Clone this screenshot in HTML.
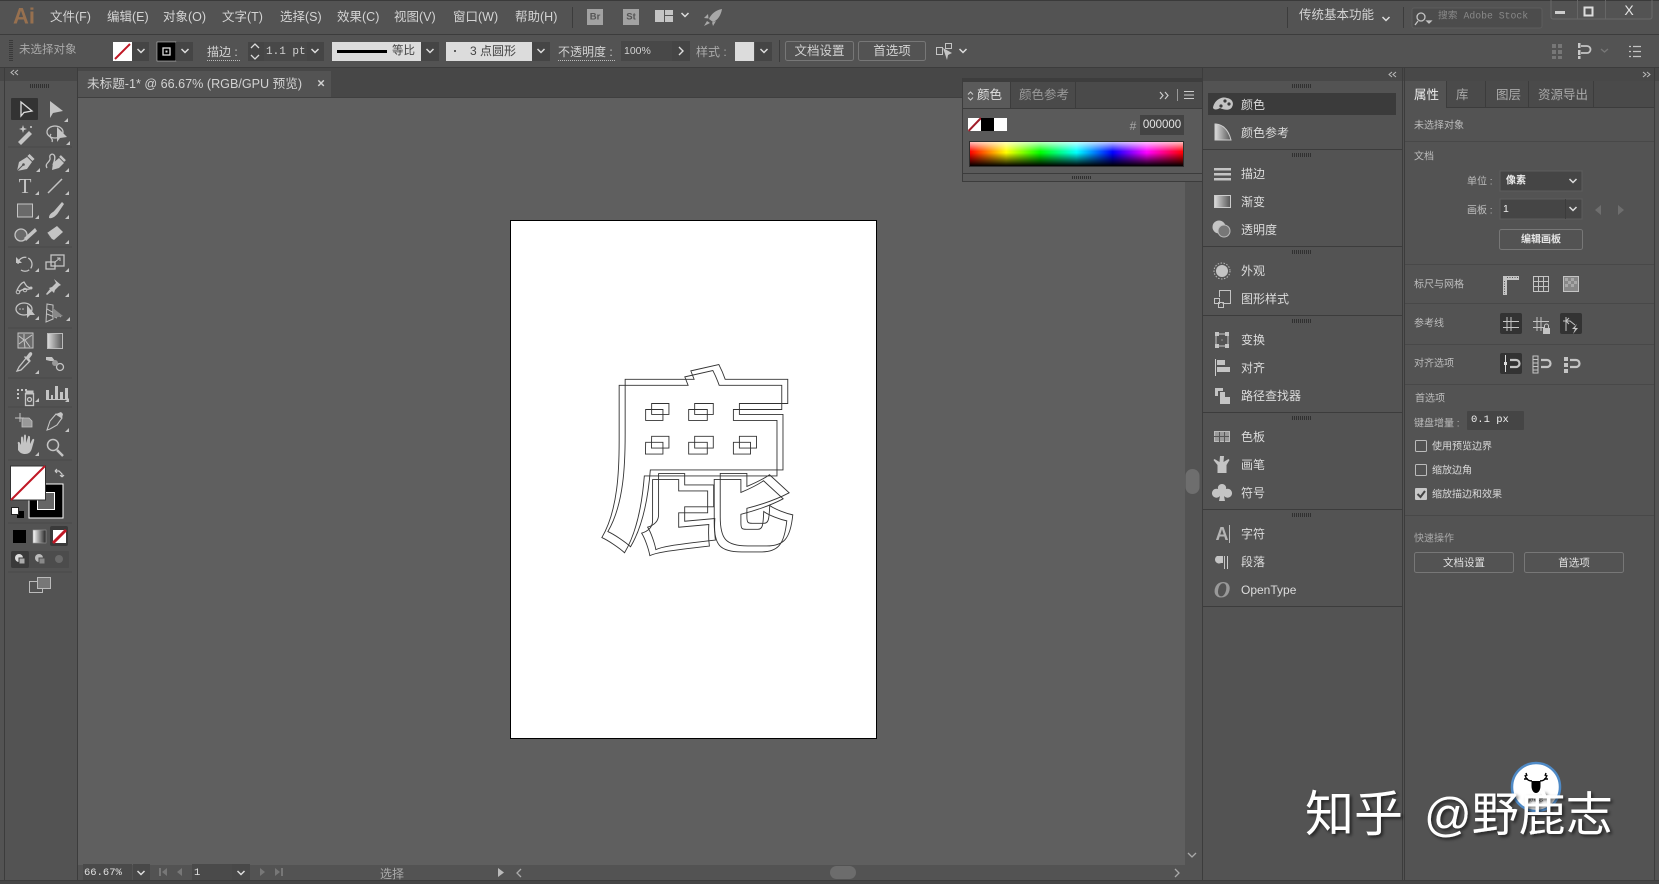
<!DOCTYPE html>
<html lang="zh"><head><meta charset="utf-8"><title>Illustrator</title>
<style>
html,body{margin:0;padding:0;background:#535353;overflow:hidden}
svg{display:block}
text{font-family:"Liberation Sans","Noto Sans CJK SC",sans-serif;fill:#d2d2d2;font-size:12px;dominant-baseline:central}
.m{font-size:12.5px;fill:#d4d4d4}
.d{fill:#aaa}
.s{font-size:10px;fill:#bdbdbd}
.p{font-size:12px;fill:#dcdcdc}
.mono{font-family:"Liberation Mono","Noto Sans CJK SC",monospace}
.i{fill:#c4c4c4;stroke:none}
.o{fill:none;stroke:#c4c4c4;stroke-width:1.3}
.l{stroke:#3c3c3c;stroke-width:1;fill:none}
.g{stroke:#303030;stroke-width:4;stroke-dasharray:1 1;fill:none}
.b{fill:none;stroke:#777;stroke-width:1}
</style></head><body>
<svg width="1659" height="884" viewBox="0 0 1659 884" xmlns="http://www.w3.org/2000/svg">
<defs>
<path id="c" d="M-3.5 -2L0 1.500L3.500 -2" fill="none" stroke="#dcdcdc" stroke-width="1.500"/>
<path id="t" d="M0 0L4 0L4 -4Z" fill="#c4c4c4"/>
<linearGradient id="sp"><stop offset="0" stop-color="#f00"/><stop offset=".17" stop-color="#ff0"/><stop offset=".33" stop-color="#0f0"/><stop offset=".5" stop-color="#0ff"/><stop offset=".67" stop-color="#00f"/><stop offset=".83" stop-color="#f0f"/><stop offset="1" stop-color="#f00"/></linearGradient>
<linearGradient id="sv" x1="0" y1="0" x2="0" y2="1"><stop offset="0" stop-color="#fff" stop-opacity=".75"/><stop offset=".4" stop-color="#fff" stop-opacity="0"/><stop offset=".45" stop-color="#000" stop-opacity="0"/><stop offset="1" stop-color="#000"/></linearGradient>
<linearGradient id="gr"><stop offset="0" stop-color="#ddd"/><stop offset="1" stop-color="#555"/></linearGradient>
<linearGradient id="gw"><stop offset="0" stop-color="#fff"/><stop offset="1" stop-color="#222"/></linearGradient>
<filter id="sh" x="-5%" y="-10%" width="110%" height="125%"><feDropShadow dx="2" dy="2" stdDeviation="1.500" flood-color="#000" flood-opacity=".6"/></filter>
</defs>

<!-- base -->
<rect width="1659" height="884" fill="#535353"/>
<rect x="0" y="0" width="1659" height="1" fill="#3a3a3a"/>
<path class="l" d="M0 34.500H1659M0 67.500H1659"/>
<rect x="0" y="68" width="1659" height="13" fill="#484848"/>
<rect x="78" y="68" width="1124" height="30" fill="#474747"/>
<rect x="78" y="71" width="253" height="27" fill="#535353"/>
<rect x="78" y="98" width="1107" height="767" fill="#5f5f5f"/>
<rect x="78" y="97" width="1107" height="1" fill="#3f3f3f"/>

<!-- left toolbar frame -->
<rect x="4" y="81" width="73" height="799" fill="#535353"/>
<path class="l" d="M4.500 68V880M77.500 68V880M0 880.500H1659"/>
<rect x="0" y="881" width="1659" height="3" fill="#454545"/>
<path d="M14 70L11 72.500L14 75M18 70L15 72.500L18 75" fill="none" stroke="#bbb"/>
<path class="g" d="M30 86H50"/>

<!-- menu -->
<text x="13" y="16" style="font-size:22px;font-weight:700;fill:#97704f">Ai</text>
<text class="m" x="50" y="17">文件(F)</text>
<text class="m" x="107" y="17">编辑(E)</text>
<text class="m" x="163" y="17">对象(O)</text>
<text class="m" x="222" y="17">文字(T)</text>
<text class="m" x="280" y="17">选择(S)</text>
<text class="m" x="337" y="17">效果(C)</text>
<text class="m" x="394" y="17">视图(V)</text>
<text class="m" x="453" y="17">窗口(W)</text>
<text class="m" x="515" y="17">帮助(H)</text>
<path class="l" d="M572.500 7V28M1287.500 7V28M1403.500 7V28"/>
<rect x="587" y="9" width="16" height="16" fill="#a2a2a2"/><text x="595" y="17" text-anchor="middle" style="font-size:9.500px;font-weight:700;fill:#555">Br</text>
<rect x="623" y="9" width="16" height="16" fill="#a2a2a2"/><text x="631" y="17" text-anchor="middle" style="font-size:9.500px;font-weight:700;fill:#555">St</text>
<path class="i" d="M655 10h9v12h-9zM665 10h8v5h-8zM665 16h8v6h-8z"/>
<use href="#c" x="685" y="15"/>
<path fill="#a8a8a8" d="M722 9C716 10 711 14 709 19L713 22C718 20 721 15 722 9ZM708 14L704 18L708.500 18.500ZM716 21L713 26L712 22.500ZM707 21L704 26L710 23Z"/>

<text x="1299" y="15" style="font-size:12.500px;fill:#d4d4d4">传统基本功能</text>
<use href="#c" x="1386" y="19"/>
<rect x="1412" y="8" width="130" height="20" rx="2" fill="#4c4c4c" stroke="#5c5c5c"/>
<circle cx="1421" cy="17" r="4" class="o"/><path class="o" d="M1418 21L1415 25M1427 21h4l-2 2z"/>
<text class="mono" x="1438" y="16" style="font-size:9.800px;fill:#888">搜索 Adobe Stock</text>
<rect x="1551" y="-2" width="101" height="21" rx="2" fill="none" stroke="#6a6a6a"/>
<path class="l" style="stroke:#666" d="M1577.500 0V19M1605.500 0V19"/>
<rect x="1555" y="11" width="10" height="3" fill="#ccc"/>
<rect x="1584.500" y="7.500" width="8" height="8" fill="none" stroke="#ddd" stroke-width="2"/>
<text x="1629" y="10" text-anchor="middle" style="font-size:14px;fill:#e4e4e4">X</text>

<!-- control bar -->
<path class="g" style="stroke:#3a3a3a" d="M11 40V62" />
<text x="19" y="50" style="font-size:11.500px;fill:#aaa">未选择对象</text>
<rect x="113" y="42" width="19" height="19" fill="#fff"/><path d="M115 59L130 44" stroke="#c01825" stroke-width="2"/>
<rect x="132" y="42" width="17" height="19" fill="#454545"/><use href="#c" x="141" y="51"/>
<rect x="157" y="42" width="19" height="19" fill="#000" stroke="#ddd" stroke-width=".5"/><rect x="163" y="48" width="7" height="7" fill="none" stroke="#ddd" stroke-width="1.300"/><rect x="165.500" y="50.500" width="2" height="2" fill="#ddd"/>
<rect x="176" y="42" width="17" height="19" fill="#454545"/><use href="#c" x="185" y="51"/>
<text x="207" y="52" style="font-size:12px">描边 :</text><path d="M207 60.500H240" stroke="#bbb" stroke-dasharray="1 1"/>
<rect x="248" y="42" width="76" height="19" fill="#454545"/>
<path d="M251 48L255 44L259 48M251 55L255 59L259 55" fill="none" stroke="#ddd" stroke-width="1.300"/>
<rect x="264" y="42" width="43" height="19" fill="#484848"/>
<text class="mono" x="266" y="52" style="font-size:11px">1.1 pt</text>
<use href="#c" x="315" y="51"/>
<rect x="332" y="42" width="89" height="19" fill="#dcdcdc"/><rect x="337" y="50" width="50" height="3" fill="#000"/>
<text x="392" y="51" style="font-size:11.500px;fill:#444">等比</text>
<rect x="421" y="42" width="18" height="19" fill="#454545"/><use href="#c" x="430" y="51"/>
<rect x="446" y="42" width="86" height="19" fill="#dcdcdc"/><circle cx="455" cy="51" r="1" fill="#333"/>
<text x="470" y="51" style="font-size:12px;fill:#444">3 点圆形</text>
<rect x="532" y="42" width="18" height="19" fill="#454545"/><use href="#c" x="541" y="51"/>
<text x="558" y="52" style="font-size:12px">不透明度 :</text><path d="M558 60.500H616" stroke="#bbb" stroke-dasharray="1 1"/>
<rect x="621" y="41" width="51" height="20" fill="#484848"/><text x="624" y="51" style="font-size:10.500px">100%</text>
<rect x="672" y="41" width="18" height="20" fill="#454545"/><path d="M679 47L683 51L679 55" fill="none" stroke="#ddd" stroke-width="1.400"/>
<text x="696" y="52" class="d">样式 :</text>
<rect x="735" y="42" width="19" height="19" fill="#dcdcdc"/>
<rect x="755" y="42" width="17" height="19" fill="#454545"/><use href="#c" x="764" y="51"/>
<path class="l" d="M779.500 40V62"/>
<rect x="785.500" y="41.500" width="68" height="19" rx="2" class="b"/><text x="819.500" y="51" text-anchor="middle" style="font-size:12.500px">文档设置</text>
<rect x="858.500" y="41.500" width="67" height="19" rx="2" class="b"/><text x="892" y="51" text-anchor="middle" style="font-size:12.500px">首选项</text>
<path class="o" style="stroke-width:1" d="M936.500 47.500h6v7h-6zM945.500 43.500h6v5h-6z"/><path class="i" d="M943 48L952 53L948 55L947 60Z"/>
<use href="#c" x="963" y="51"/>
<path class="i" style="fill:#777" d="M1552 44h4v4h-4zM1558 44h4v4h-4zM1552 50h4v4h-4zM1558 50h4v4h-4zM1552 56h4v3h-4zM1558 56h4v3h-4z"/>
<path class="o" d="M1581 46h6a3 3 0 0 1 0 7h-6" style="stroke-width:1.800"/><rect x="1578" y="43" width="2.500" height="5" fill="#c9c9c9"/><rect x="1578" y="50" width="2.500" height="5" fill="#c9c9c9"/><rect x="1578" y="56" width="2.500" height="3" fill="#c9c9c9"/>
<path d="M1601 49L1604.500 52L1608 49" fill="none" stroke="#777" stroke-width="1.300"/>
<path class="o" d="M1629 46.500h2M1633 46.500h8M1629 51.500h2M1633 51.500h8M1629 56.500h2M1633 56.500h8" style="stroke-width:1.200"/>

<!-- document tab -->
<text x="87" y="84" style="font-size:12.600px">未标题-1* @ 66.67% (RGB/GPU 预览)</text>
<text x="321" y="83" text-anchor="middle" style="font-size:13px;font-weight:700">×</text>

<!-- artboard -->
<rect x="510.500" y="220.500" width="366" height="518" fill="#fff" stroke="#000"/>
<text x="701" y="531" text-anchor="middle" style="font-family:'Noto Sans CJK SC',sans-serif;font-weight:900;font-size:192px;fill:none;stroke:#333;stroke-width:.9;dominant-baseline:auto">鹿</text>
<text x="695" y="537" text-anchor="middle" style="font-family:'Noto Sans CJK SC',sans-serif;font-weight:900;font-size:192px;fill:none;stroke:#333;stroke-width:.9;dominant-baseline:auto">鹿</text>

<!-- vertical and horizontal scrollbars -->
<rect x="1185" y="98" width="17" height="767" fill="#535353"/>
<rect x="1185.500" y="469" width="14" height="25" rx="7" fill="#6e6e6e"/>
<path d="M1188 853L1192 857L1196 853" fill="none" stroke="#aaa" stroke-width="1.300"/>
<rect x="78" y="865" width="1124" height="15" fill="#535353"/>
<rect x="830" y="866" width="26" height="13" rx="6.500" fill="#6c6c6c"/>
<path d="M1175 869L1179 873L1175 877M521 869L517 873L521 877" fill="none" stroke="#aaa" stroke-width="1.300"/>
<rect x="83" y="864" width="49" height="16" fill="#4a4a4a"/>
<text class="mono" x="84" y="873" style="font-size:10.500px;fill:#e0e0e0">66.67%</text>
<rect x="133" y="864" width="17" height="16" fill="#484848"/><use href="#c" x="141" y="873"/>
<path fill="#777" d="M159 868h2v8h-2zM167 868v8l-5-4zM182 868v8l-5-4z"/>
<rect x="192" y="864" width="40" height="16" fill="#4a4a4a"/><text class="mono" x="194" y="873" style="font-size:10.500px;fill:#e0e0e0">1</text>
<rect x="232" y="864" width="18" height="16" fill="#484848"/><use href="#c" x="241" y="873"/>
<path fill="#777" d="M260 868v8l5-4zM275 868v8l5-4zM281 868h2v8h-2z"/>
<text x="392" y="874" text-anchor="middle" class="d">选择</text>
<path fill="#bbb" d="M498 868v9l6-4.500z"/>

<!-- color panel -->
<rect x="962" y="78" width="240" height="4" fill="#3d3d3d"/>
<rect x="962" y="82" width="240" height="26" fill="#4a4a4a"/>
<rect x="962" y="82" width="48" height="27" fill="#5a5a5a"/>
<rect x="962" y="108" width="240" height="66" fill="#5a5a5a"/>
<rect x="962" y="174" width="240" height="7" fill="#5a5a5a"/>
<path class="l" d="M962.500 78V182M962 108.500H1010M1010.500 82V108M1075.500 82V108M1010 108.500H1202M962 173.500H1202M962 181.500H1202"/>
<path d="M968 94.500L970.500 92L973 94.500M968 97.500L970.500 100L973 97.500" fill="none" stroke="#ccc"/>
<text x="977" y="95" style="font-size:12.500px;fill:#e0e0e0">颜色</text>
<text x="1019" y="95" style="font-size:12.500px;fill:#9a9a9a">颜色参考</text>
<path d="M1160 92l3 3.500l-3 3.500M1165 92l3 3.500l-3 3.500" fill="none" stroke="#ccc" stroke-width="1.200"/>
<path d="M1177.500 89V101" stroke="#999"/>
<path d="M1184 91.500h10M1184 95h10M1184 98.500h10" stroke="#ccc" stroke-width="1"/>
<rect x="968" y="118" width="13" height="13" fill="#fff"/><path d="M968.500 131L981 118" stroke="#a01c28" stroke-width="2"/>
<rect x="981" y="118" width="13" height="13" fill="#000"/><rect x="994" y="118" width="13" height="13" fill="#fff"/>
<text x="1133" y="126" text-anchor="middle" style="fill:#aaa;font-size:12px">#</text>
<rect x="1140" y="115" width="44" height="20" fill="#434343"/>
<text x="1162" y="125" text-anchor="middle" style="font-size:11.500px;fill:#e4e4e4">000000</text>
<rect x="970" y="142" width="213" height="24" fill="url(#sp)"/><rect x="970" y="142" width="213" height="24" fill="url(#sv)"/>
<rect x="969.500" y="141.500" width="214" height="25" fill="none" stroke="#2f2f2f"/>
<path class="g" d="M1072 177.500H1092" style="stroke-width:3"/>

<!-- dock -->
<path d="M1392 72L1389 74.500L1392 77M1396 72L1393 74.500L1396 77" fill="none" stroke="#bbb"/>
<path d="M1643 72L1646 74.500L1643 77M1647 72L1650 74.500L1647 77" fill="none" stroke="#bbb"/>
<rect x="1202" y="81" width="200" height="799" fill="#535353"/>
<rect x="1405" y="81" width="250" height="799" fill="#535353"/>
<path class="l" d="M1202.500 68V880M1402.500 68V880M1404.500 68V880M1654.500 68V880"/>
<path class="l" d="M1202 149.500H1402M1202 246.500H1402M1202 315.500H1402M1202 412.500H1402M1202 509.500H1402M1202 606.500H1402"/>
<path class="g" d="M1292 86H1312M1292 155H1312M1292 252H1312M1292 321H1312M1292 418H1312M1292 515H1312"/>
<rect x="1208" y="93" width="188" height="22" fill="#3b3b3b"/>
<g>
<text class="p" x="1241" y="105">颜色</text>
<text class="p" x="1241" y="133">颜色参考</text>
<text class="p" x="1241" y="174">描边</text>
<text class="p" x="1241" y="202">渐变</text>
<text class="p" x="1241" y="230">透明度</text>
<text class="p" x="1241" y="271">外观</text>
<text class="p" x="1241" y="299">图形样式</text>
<text class="p" x="1241" y="340">变换</text>
<text class="p" x="1241" y="368">对齐</text>
<text class="p" x="1241" y="396">路径查找器</text>
<text class="p" x="1241" y="437">色板</text>
<text class="p" x="1241" y="465">画笔</text>
<text class="p" x="1241" y="493">符号</text>
<text class="p" x="1241" y="534">字符</text>
<text class="p" x="1241" y="562">段落</text>
<text class="p" x="1241" y="590">OpenType</text>
</g>
<!-- dock icons -->
<path class="i" d="M1213 108C1214 100 1222 96 1227 98C1233 99 1234 104 1232 107C1230 111 1224 110 1220 108C1217 110 1214 110 1213 108Z"/><g fill="#3b3b3b"><circle cx="1221" cy="106" r="1.600"/><circle cx="1225" cy="101" r="1.600"/><circle cx="1229" cy="104" r="1.600"/></g>
<path d="M1215 124H1216C1225 125 1229 132 1231 140H1215Z" fill="url(#gr)" stroke="#ccc"/>
<path d="M1214 168h17v2.500h-17zM1214 173h17v2.500h-17zM1214 178h17v2.500h-17z" class="i"/>
<rect x="1214.500" y="195.500" width="16" height="12" fill="url(#gr)" stroke="#ccc"/>
<circle cx="1219" cy="227" r="6.500" fill="#c4c4c4"/><circle cx="1224" cy="231" r="6" fill="#777" stroke="#bbb"/>
<circle cx="1222" cy="271" r="6" fill="#c4c4c4"/><circle cx="1222" cy="271" r="8" fill="none" stroke="#bbb" stroke-dasharray="1.500 1.500"/>
<path class="o" style="stroke-width:1" d="M1219.500 297v-6.500h11v13h-8"/><rect x="1214.500" y="298.500" width="5" height="5" class="o" style="stroke-width:1"/><rect x="1218.500" y="302.500" width="5" height="5" class="o" style="stroke-width:1"/>
<path class="o" style="stroke-width:1" d="M1218 334h8M1218 346h8M1216 336v8M1228 336v8"/><path class="i" d="M1215 332h4v4h-4zM1225 332h4v4h-4zM1215 344h4v4h-4zM1225 344h4v4h-4z"/><rect x="1221.500" y="339.500" width="1" height="1" fill="#ccc"/>
<path d="M1215.500 359V376" stroke="#ccc"/><path class="i" d="M1217 360h8v5h-8zM1217 367h13v5h-13z"/>
<path class="i" d="M1215 388h8v3h-5v5h-3zM1220 392h5v5h5v7h-10z"/>
<rect x="1214.500" y="431.500" width="15" height="10" fill="#999" stroke="#bbb"/><path d="M1214 436.500h15M1219.500 432v10M1224.500 432v10" stroke="#555"/>
<path class="i" d="M1220 456h4l-.5 6l5-3l1 1l-3 5v8h-9v-8l-4-5l1-1l5 3z"/>
<path class="i" d="M1222 484a4 4 0 0 1 4 5a4.500 4.500 0 1 1-2 7l1 5h-6l1-5a4.500 4.500 0 1 1-2-7a4 4 0 0 1 4-5z"/>
<text x="1222" y="534" text-anchor="middle" style="font-size:18px;font-weight:700;fill:#b4b4b4">A</text><path d="M1229.500 525V543" stroke="#bbb"/>
<path class="i" d="M1217 556h6v7h-2a3.500 3.500 0 0 1-4-7zM1224 556h1v13h-1z"/><path d="M1227.500 556V569" stroke="#ccc"/>
<text x="1222" y="590" text-anchor="middle" style="font-family:'Liberation Serif',serif;font-size:23px;font-style:italic;font-weight:700;fill:#999">O</text>

<!-- properties -->
<rect x="1405" y="81" width="249" height="27" fill="#4a4a4a"/>
<rect x="1405" y="81" width="41" height="27" fill="#535353"/>
<path class="l" d="M1446.500 81V108M1485.500 81V108M1528.500 81V108M1593.500 81V108M1446 107.500H1654"/>
<text x="1414" y="95" style="font-size:12.500px;fill:#eee">属性</text>
<text x="1456" y="95" class="d" style="font-size:12.500px">库</text>
<text x="1496" y="95" class="d" style="font-size:12.500px">图层</text>
<text x="1538" y="95" class="d" style="font-size:12.500px">资源导出</text>
<path d="M1405 141.500H1654M1405 264.500H1654M1405 303.500H1654M1405 344.500H1654M1405 384.500H1654M1405 515.500H1654" stroke="#484848"/>
<g>
<text class="s" x="1414" y="126">未选择对象</text>
<text class="s" x="1414" y="157">文档</text>
<text class="s" x="1467" y="182">单位 :</text>
<text class="s" x="1467" y="211">画板 :</text>
<text class="s" x="1414" y="285">标尺与网格</text>
<text class="s" x="1414" y="324">参考线</text>
<text class="s" x="1414" y="364">对齐选项</text>
<text class="s" x="1415" y="399">首选项</text>
<text class="s" x="1414" y="424">键盘增量 :</text>
<text class="s" x="1432" y="447" style="fill:#d8d8d8">使用预览边界</text>
<text class="s" x="1432" y="471" style="fill:#d8d8d8">缩放边角</text>
<text class="s" x="1432" y="495" style="fill:#d8d8d8">缩放描边和效果</text>
<text class="s" x="1414" y="539" style="fill:#a8a8a8">快速操作</text>
</g>
<rect x="1500" y="171" width="82" height="20" fill="#454545" stroke="#5d5d5d"/>
<text x="1506" y="181" style="font-size:10px;fill:#eee;font-weight:700">像素</text><use href="#c" x="1573" y="181"/>
<rect x="1500" y="199" width="82" height="20" fill="#454545" stroke="#5d5d5d"/><path class="l" d="M1565.500 199V219"/>
<text x="1503" y="209" style="font-size:10.500px;fill:#eee">1</text><use href="#c" x="1573" y="209"/>
<path d="M1601 205v10l-6-5zM1618 205v10l6-5z" fill="#6e6e6e"/>
<rect x="1499.500" y="229.500" width="83" height="20" rx="2" class="b"/><text x="1541" y="240" text-anchor="middle" style="font-size:10px;font-weight:700;fill:#e4e4e4">编辑画板</text>
<!-- rulers / grid -->
<path class="i" d="M1503 276h16v4h-12v15h-4z"/><path d="M1507 277.500h11M1504.500 281v13" stroke="#555" stroke-width="1" stroke-dasharray="1 1.500"/>
<rect x="1533.500" y="276.500" width="15" height="15" class="o" style="stroke-width:1"/><path class="o" d="M1533 281.500h16M1533 286.500h16M1538.500 276v16M1543.500 276v16" style="stroke-width:1"/>
<rect x="1563.500" y="276.500" width="15" height="15" fill="#888" stroke="#c4c4c4"/>
<path d="M1565 278h3v3h-3zM1571 278h3v3h-3zM1568 281h3v3h-3zM1574 281h3v3h-3zM1565 284h3v3h-3zM1571 284h3v3h-3z" fill="#a8a8a8"/>
<rect x="1500" y="313" width="22" height="21" rx="2" fill="#333"/><rect x="1560" y="313" width="22" height="21" rx="2" fill="#333"/>
<path class="o" d="M1507 317V331M1511 317V331M1503 321.500H1519M1503 327.500H1519" style="stroke-width:1"/>
<path class="o" d="M1537 317V331M1541 317V331M1533 321.500H1549M1533 327.500H1545" style="stroke-width:1"/><path class="i" d="M1543 328h7v6h-7z"/><path class="o" d="M1544.500 328v-2a2 2 0 0 1 4 0v2" style="stroke-width:1"/>
<path class="o" d="M1566 317V331M1563 321h7l5 4M1566 321l3-3M1566 321l3 3" style="stroke-width:1"/><path class="i" d="M1577 324l-5 5h3l-2 5l5-6h-3z"/>
<rect x="1500" y="353" width="22" height="21" rx="2" fill="#333"/>
<path d="M1505.500 355V372" stroke="#ddd"/><rect x="1504" y="362" width="3" height="3" fill="#ddd"/>
<path class="o" d="M1510 360h6a3.500 3.500 0 0 1 0 7h-6" style="stroke-width:2.200"/>
<path class="o" d="M1533 356h5v17h-5zM1533 359.500h5M1533 363h5M1533 366.500h5M1533 370h5" style="stroke-width:1"/><path class="o" d="M1541 360h6a3.500 3.500 0 0 1 0 7h-6" style="stroke-width:2.200"/>
<path class="i" d="M1564 357h4v4h-4zM1564 363h4v4h-4zM1564 369h4v4h-4z"/><path class="o" d="M1570 360h6a3.500 3.500 0 0 1 0 7h-6" style="stroke-width:2.200"/>
<rect x="1467" y="411" width="57" height="19" rx="1" fill="#454545"/>
<text class="mono" x="1471" y="420" style="font-size:10.500px;fill:#eee">0.1 px</text>
<rect x="1415.500" y="440.500" width="11" height="11" rx="1" fill="none" stroke="#bbb"/>
<rect x="1415.500" y="464.500" width="11" height="11" rx="1" fill="none" stroke="#bbb"/>
<rect x="1415" y="488" width="12" height="12" rx="1" fill="#c8c8c8"/><path d="M1417.500 494L1420.500 497L1425 491" fill="none" stroke="#444" stroke-width="2"/>
<rect x="1414.500" y="552.500" width="99" height="20" rx="2" class="b"/><text x="1464" y="563" text-anchor="middle" style="font-size:10.500px;fill:#e0e0e0">文档设置</text>
<rect x="1524.500" y="552.500" width="99" height="20" rx="2" class="b"/><text x="1574" y="563" text-anchor="middle" style="font-size:10.500px;fill:#e0e0e0">首选项</text>

<!-- toolbar tools -->
<rect x="11" y="98" width="27" height="22" rx="1" fill="#333"/>
<path d="M21 102V116L24 112.500L32 111Z" fill="none" stroke="#ddd" stroke-width="1.300"/>
<path class="i" d="M50 101V118L53 113L63 111Z"/>
<path class="i" d="M18 142L29 131L32 134L21 145zM23 125l1 3l3 1l-3 1l-1 3l-1-3l-3-1l3-1z"/><circle cx="31" cy="127" r="1" fill="#ccc"/>
<ellipse cx="55" cy="132" rx="8" ry="6" class="o"/><path class="o" d="M51 134c-3 4 3 4 1 8"/><path class="i" d="M57 127V142L60 138L67 137Z"/>
<!-- pen -->
<path class="i" d="M17 171L19 162L27 157L32 162L27 169Z"/><path d="M17 171L23 165" stroke="#535353"/><circle cx="23.500" cy="164.500" r="1.300" fill="#535353"/><path d="M28.500 155L33.500 160" stroke="#c4c4c4" stroke-width="3"/>
<!-- curvature -->
<path class="o" d="M47 168c-3-5 4-6 3-10c-1-3 2-5 4-3c2 2 0 7-1 10"/><path class="i" d="M52 170L53 163L59 158L64 163L59 168Z"/><path d="M60 156L65 161" stroke="#c4c4c4" stroke-width="2.500"/>
<text x="25" y="186" text-anchor="middle" style="font-family:'Liberation Serif',serif;font-size:21px;fill:#c4c4c4">T</text>
<path d="M48 193L62 179" stroke="#c4c4c4" stroke-width="1.500"/>
<rect x="17.500" y="204" width="15" height="13" fill="#6a6a6a" stroke="#c4c4c4"/>
<path class="i" d="M49 218C49 213 53 213 55 210L62 202L64 204L58 213C56 216 52 219 49 218Z"/>
<circle cx="21" cy="235" r="6" fill="#6a6a6a" stroke="#c4c4c4" stroke-width="1.300"/><path class="i" d="M24 238L35 228L37 231L26 241Z"/>
<path class="i" d="M47 233L57 226L63 232L54 240L50 238Z"/><path d="M47 233L52 240" stroke="#555"/>
<path class="o" d="M18 264a7 7 0 1 1 3 6" stroke-dasharray="12 2"/><path class="i" d="M16 257v6h6z"/>
<rect x="46" y="262" width="9" height="7" class="o"/><rect x="51" y="255" width="13" height="11" class="o"/><path class="o" d="M55 262l5-4M57 258h3v3" style="stroke-width:1"/>
<path class="o" d="M17 290c2-4 4-7 7-8c2 3 2 5 7 6c-3 3-7-1-12 4"/><circle cx="18" cy="292" r="1.800" class="o" style="stroke-width:1"/><circle cx="25" cy="290" r="1.800" class="o" style="stroke-width:1"/><circle cx="31" cy="288" r="1.500" class="i"/>
<path class="i" d="M54 279l7 6l-2 1l-4 4l-1 3l-5-5l3-1l4-4zM50 289l-4 5l1 1l5-4z"/>
<ellipse cx="24" cy="309" rx="8" ry="6" class="o"/><path class="i" d="M27 305v13l3-3l5 0z"/><circle cx="20" cy="309" r=".8" class="i"/><circle cx="23" cy="309" r=".8" class="i"/>
<path class="o" d="M47 304l6 1v14l-7 3zM47 309l14 8M47 314l10 4" style="stroke-width:1"/><path d="M53 308l10 8l-10 2z" fill="#888"/>
<rect x="18" y="333" width="15" height="15" fill="#6a6a6a" stroke="#c4c4c4"/><path class="o" d="M19 336l5 4l-5 4M32 335l-7 5l5 7M24 340l1 8M24 334v6" style="stroke-width:1"/>
<rect x="47.500" y="333.500" width="15" height="15" fill="url(#gr)" stroke="#bbb"/>
<!-- eyedropper -->
<path class="o" d="M27 357L19 367L17 371L21 370L30 361Z"/><path class="i" d="M26 357l3-4c2-2 4 0 3 2l-3 4l1 1l-1 2l-5-5l1-1z"/>
<path class="i" d="M46 357h6l3 4h-5l-4-1z"/><circle cx="60" cy="367" r="3.500" class="o"/><circle cx="55" cy="363" r="3" fill="#999"/>
<path class="i" d="M17 389h2v2h-2zM21 389h2v2h-2zM17 393h2v2h-2zM25 389h2v2h-2zM17 397h2v2h-2z"/><rect x="25.500" y="390.500" width="8" height="4" class="i"/><rect x="25.500" y="393.500" width="8" height="12" class="o"/><circle cx="29.500" cy="399.500" r="2" class="o"/>
<path class="i" d="M46 390h3v9h-3zM51 395h2v4h-2zM55 386h3v13h-3zM60 392h3v7h-3zM65 388h3v11h-3z"/><path d="M46 399.500H69" stroke="#c4c4c4"/>
<path d="M22 418h7l3 3v6h-10z" fill="#999" stroke="#c4c4c4" stroke-width=".8"/><path class="o" d="M15 418h9M20 413v9" style="stroke-width:1"/>
<!-- knife -->
<path class="o" d="M47 430L50 421L56 414L62 418L57 425L50 429Z" style="stroke-width:1.100"/><path class="i" d="M56 414L61 412L63 414L62 418Z"/>
<path class="i" d="M18 444c-1-2 1-3 2-1l1 2v-7c0-2 2-2 2 0v5l1-7c0-2 2-2 2 0v7l2-6c0-2 2-1 2 0v7l2-4c1-2 3-1 2 1l-2 7c-1 4-3 6-7 6c-3 0-5-1-7-4z"/>
<circle cx="53" cy="445" r="5.500" class="o" style="stroke-width:1.500"/><path d="M57 450L63 456" stroke="#c4c4c4" stroke-width="2.500"/>
<!-- fill / stroke -->
<rect x="29" y="484" width="34" height="34" fill="#000" stroke="#fff" stroke-width="1"/>
<rect x="37.500" y="492.500" width="17" height="17" fill="#666" stroke="#fff"/>
<rect x="10.500" y="466" width="35" height="34" fill="#fff" stroke="#333"/>
<path d="M11 500L45 466" stroke="#c01825" stroke-width="2"/>
<path d="M55 471h4l3 3v3M55 471l2-2M55 471l2 2M62 477l-2-2M62 477l2-2" fill="none" stroke="#ccc" stroke-width="1.200"/>
<rect x="17" y="511" width="7" height="7" fill="#000"/>
<rect x="11.500" y="507.500" width="7" height="7" fill="#fff" stroke="#222"/>
<rect x="13" y="530" width="13" height="13" fill="#000"/>
<rect x="33" y="530" width="13" height="13" fill="url(#gw)" stroke="#999" stroke-width=".6"/>
<rect x="50" y="526" width="18" height="20" rx="2" fill="#3a3a3a"/>
<rect x="53" y="530" width="13" height="13" fill="#fff"/><path d="M53 543L66 530" stroke="#c01825" stroke-width="3"/>
<rect x="11" y="551" width="58" height="17" rx="1" fill="#4c4c4c"/><rect x="11" y="551" width="18" height="17" rx="2" fill="#3a3a3a"/>
<circle cx="19" cy="558" r="4" fill="#ddd"/><rect x="19" y="558" width="6" height="6" fill="#aaa" stroke="#3a3a3a"/>
<circle cx="39" cy="558" r="4" fill="#bbb"/><rect x="39" y="558" width="6" height="6" fill="#888" stroke="#4c4c4c"/>
<circle cx="59" cy="559" r="4" fill="#6a6a6a"/>
<rect x="29.500" y="581.500" width="13" height="11" fill="none" stroke="#bbb"/><rect x="37.500" y="577.500" width="13" height="11" fill="#777" stroke="#bbb"/>
<path class="l" style="stroke:#4a4a4a" d="M8 147H72M8 247H72M8 328H72M8 378H72M8 407H72M8 460H72M8 523H72M8 572H72"/>
<g>
<use href="#t" x="64" y="122"/><use href="#t" x="66" y="145"/><use href="#t" x="36" y="172"/><use href="#t" x="65" y="172"/><use href="#t" x="35" y="195"/><use href="#t" x="65" y="195"/><use href="#t" x="35" y="219"/><use href="#t" x="65" y="219"/><use href="#t" x="35" y="244"/><use href="#t" x="65" y="244"/><use href="#t" x="35" y="272"/><use href="#t" x="65" y="272"/><use href="#t" x="35" y="297"/><use href="#t" x="65" y="297"/><use href="#t" x="35" y="320"/><use href="#t" x="66" y="321"/><use href="#t" x="35" y="374"/><use href="#t" x="35" y="402"/><use href="#t" x="65" y="402"/><use href="#t" x="65" y="432"/><use href="#t" x="35" y="456"/>
</g>

<!-- watermark -->
<circle cx="1536" cy="787" r="24" fill="#fff" stroke="#4f8ac6" stroke-width="2.500"/>
<path d="M1531.500 781h9v5c0 4-2 7-4.500 7s-4.500-3-4.500-7z" fill="#000"/>
<path d="M1532 781c-4 0-6-2-7-6M1528 779l-4 0M1527 776l-1-3M1540 781c4 0 6-2 7-6M1544 779l4 0M1545 776l1-3" fill="none" stroke="#000" stroke-width="1.400"/>
<text x="1536" y="800" text-anchor="middle" style="font-size:5px;fill:#222">野鹿志</text>
<g filter="url(#sh)">
<text x="1305" y="831" style="font-family:'Noto Sans CJK SC',sans-serif;font-size:49px;fill:#fff;dominant-baseline:auto">知乎</text>
<text x="1424" y="831" style="font-family:'Liberation Sans','Noto Sans CJK SC',sans-serif;font-size:47px;fill:#fff;dominant-baseline:auto">@野鹿志</text>
</g>
</svg>
</body></html>
